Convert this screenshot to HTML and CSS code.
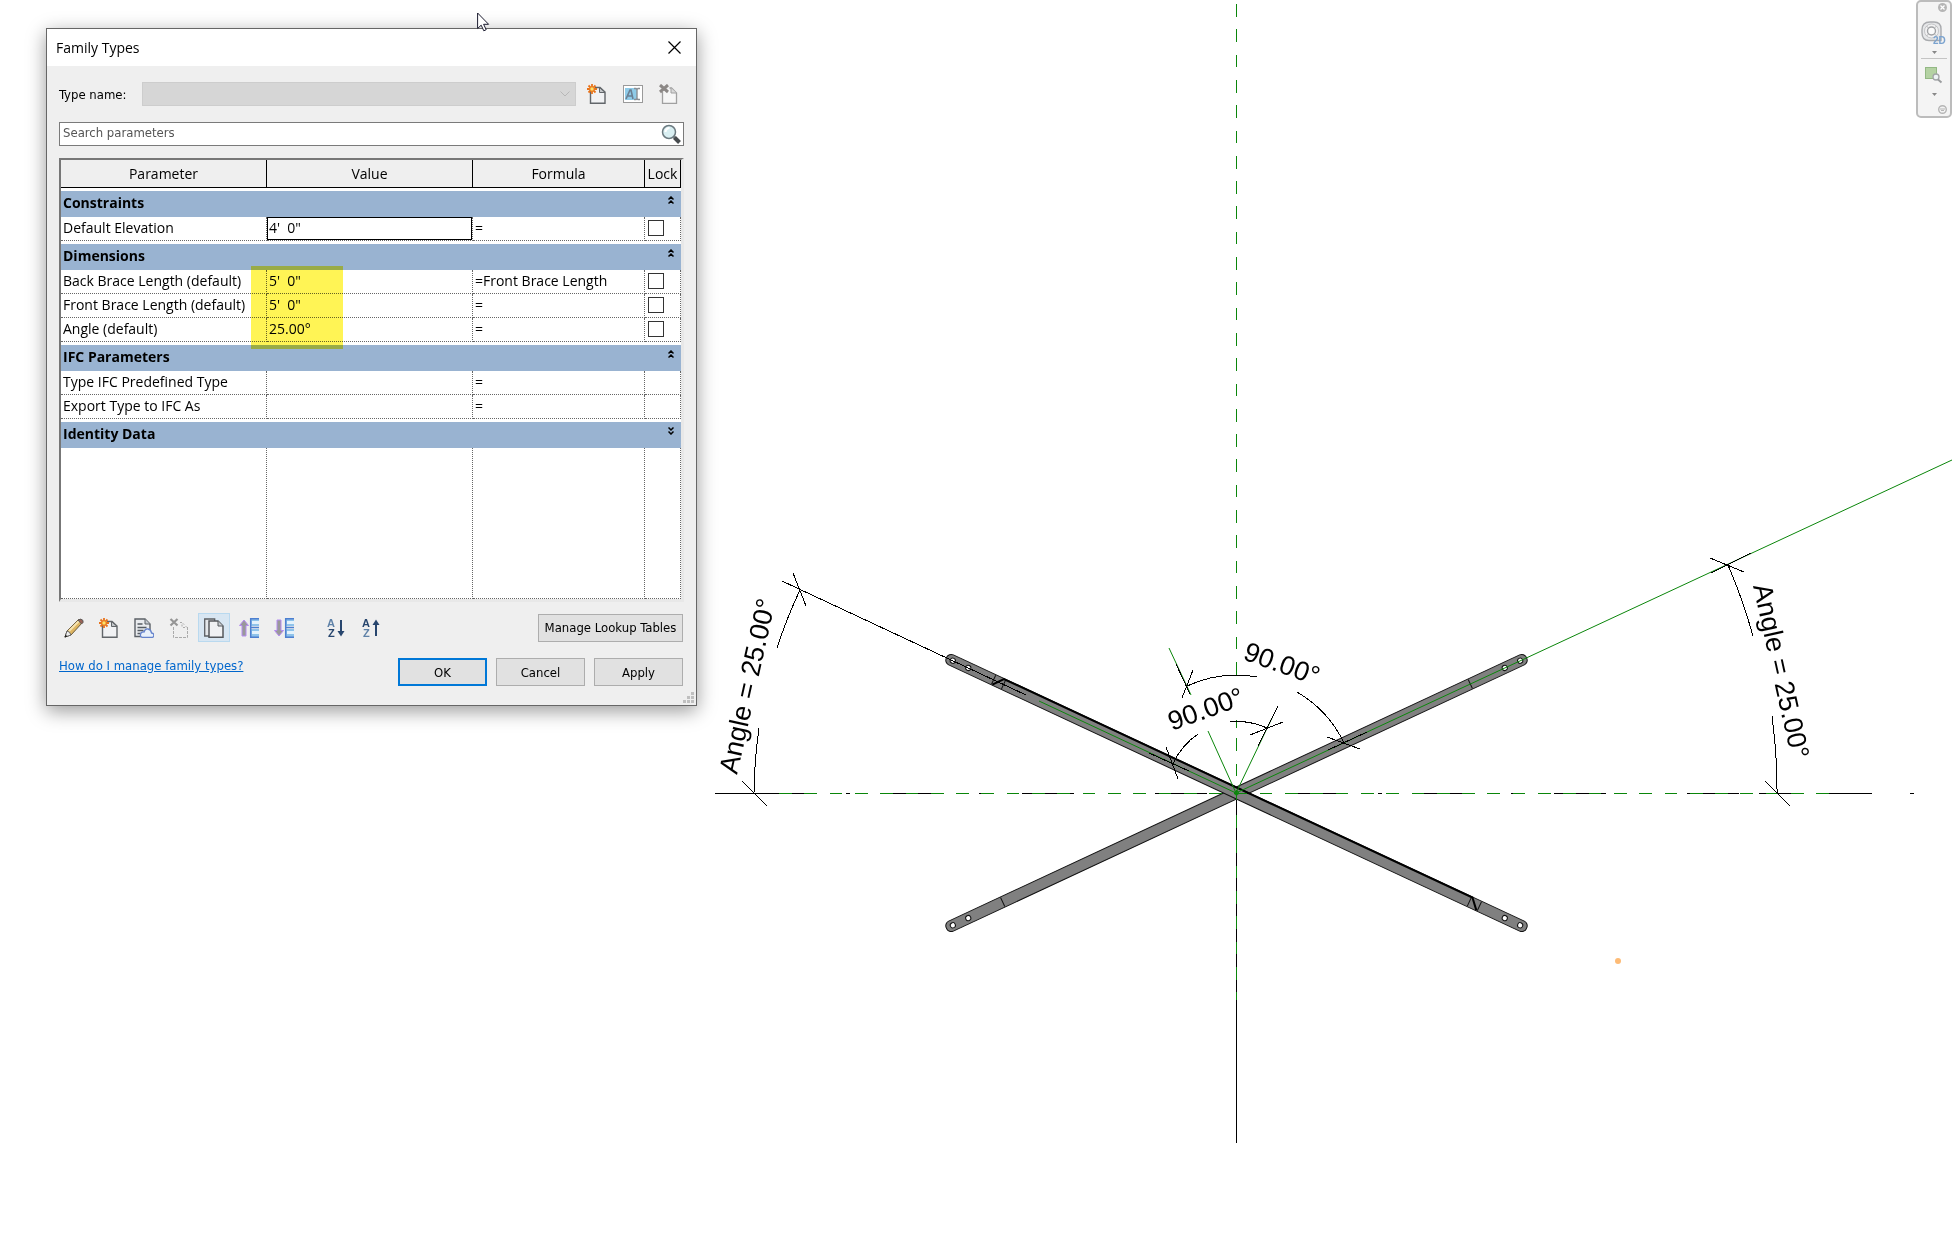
FILE: index.html
```html
<!DOCTYPE html>
<html lang="en">
<head>
    <meta charset="UTF-8">
    <meta name="viewport" content="width=device-width, initial-scale=1.0">
    <title>Family Types</title>
    <link rel="stylesheet" href="styles.css">
</head>
<body>

    <!-- drawing area -->
    <svg class="canvas" viewBox="0 0 1952 1249" preserveAspectRatio="xMinYMin meet" role="img" aria-label="Cross brace elevation">
        <!-- back brace -->
        <g transform="translate(1236.5 793) rotate(-25)">
            <rect class="brace" x="-320" y="-5.5" width="640" height="11" rx="5" />
            <path class="edge" d="M-258 -5V5M258 -5V5" />
            <circle class="hole" cx="-313" cy="0" r="2.6" />
            <circle class="hole" cx="-296" cy="0" r="2.6" />
            <circle class="hole" cx="296" cy="0" r="2.6" />
            <circle class="hole" cx="313" cy="0" r="2.6" />
        </g>

        <!-- front brace -->
        <g transform="translate(1236.5 793) rotate(25)">
            <rect class="brace" x="-320" y="-5.5" width="640" height="11" rx="5" />
            <path class="edge" d="M-268 -5V5M-257 -5V5M257 -5V5M268 -5V5" />
            <path class="heavy" d="M-267 5L-259 -5H258L267 5" />
            <circle class="hole" cx="-313" cy="0" r="2.6" />
            <circle class="hole" cx="-296" cy="0" r="2.6" />
            <circle class="hole" cx="296" cy="0" r="2.6" />
            <circle class="hole" cx="313" cy="0" r="2.6" />
        </g>

        <!-- reference planes -->
        <g class="line">
            <path d="M715 793.5H802" />
            <path d="M756 793.5H1916" stroke-dasharray="52 38 4 39" />
            <path d="M1759 793.5H1803" />
            <path d="M1236.5 800V1143" />
        </g>
        <g class="line green">
            <path d="M779 793.5H1833" stroke-dasharray="12.7 12.6" />
            <path d="M1236.5 4V675" stroke-dasharray="12.7 12.6" />
            <path d="M1236.5 720V728M1236.5 738V751M1236.5 764V776M1236.5 790V800" />
            <path d="M1236.5 815V1000" stroke-dasharray="12.7 12.6" />
        </g>
        <g class="slant green">
            <path d="M1236 793L1952 460" />
            <path d="M1039 701L1236 793" />
            <path d="M1169 648L1191 695" />
            <path d="M1208 731L1236 793L1272 718" />
            <circle cx="1236.5" cy="793" r="2" />
        </g>

        <!-- dimension lines, arcs and ticks -->
        <g class="line">
            <path d="M782 581L1026 695M793 573L806 606M742 781L767 806" />
            <path d="M800 590A482 482 0 0 0 777 648M759 728A482 482 0 0 0 754 793" />
            <path d="M1710 558L1744 572M1711 573L1751 553M1765 781L1790 806" />
            <path d="M1728 565A541 541 0 0 1 1753 636M1772 716A541 541 0 0 1 1777 793" />
            <path d="M1176 664L1190 694M1182 698L1193 670M1327 737L1360 749M1328 750L1367 732" />
            <path d="M1187 686A118 118 0 0 1 1257 677M1297 692A118 118 0 0 1 1344 743" />
            <path d="M1250 735L1283 722M1258 746L1278 706M1166 747L1178 779M1149 753L1189 771" />
            <path d="M1230 722A71 71 0 0 1 1267 728M1198 734A71 71 0 0 0 1173 764" />
        </g>
        <g class="dim">
            <text transform="translate(737 775) rotate(-77.5)">Angle = 25.00°</text>
            <text transform="translate(1753 586) rotate(77.5)">Angle = 25.00°</text>
            <text transform="translate(1172 731) rotate(-20)">90.00°</text>
            <text transform="translate(1242 659) rotate(20)">90.00°</text>
        </g>
        <circle class="dot" cx="1618" cy="961" r="3" />
    </svg>

    <form class="dialog" onsubmit="return false">
        <div class="titlebar">
            <h1>Family Types</h1>
            <button type="button" class="close" aria-label="Close">
                <svg width="13" height="13" viewBox="0 0 13 13"><path d="M.5 .5l12 12M12.5 .5l-12 12" fill="none" stroke="#000" stroke-width="1.2" /></svg>
            </button>
        </div>

        <div class="content">
            <div class="type-row">
                <label for="typeName">Type name:</label>
                <select id="typeName" disabled><option></option></select>
                <button type="button" class="icon" aria-label="New type">
                    <svg width="20" height="20" viewBox="0 0 20 20"><use href="#newDoc" /></svg>
                </button>
                <button type="button" class="icon" aria-label="Rename type">
                    <svg width="20" height="18" viewBox="0 0 20 18">
                        <rect x=".5" y=".5" width="19" height="17" fill="#fff" stroke="#9a9a9a" />
                        <rect x="2" y="3" width="12" height="12" fill="#8fcbe8" />
                        <path d="M3 14L7 5h1l2 9M5 11h4" fill="none" stroke="#6a7f92" stroke-width="1.6" />
                        <path d="M11 3.5h2l1 1 1-1h2M14 4.5v9M11 14.5h2l1-1 1 1h2" fill="none" stroke="#8b8f94" stroke-width="1.4" />
                    </svg>
                </button>
                <button type="button" class="icon" aria-label="Delete type">
                    <svg width="20" height="20" viewBox="0 0 20 20">
                        <path d="M3.5 8v11.5h14V9l-5-5h-2" fill="#f6f6f6" stroke="#a0a0a0" stroke-width="1.3" />
                        <path d="M12 4v5h5.5" fill="#d9d9d9" stroke="#a0a0a0" />
                        <path d="M1 1l8 7M9 1L1 8" stroke="#8c8886" stroke-width="3" />
                    </svg>
                </button>
            </div>

            <div class="search">
                <input type="text" placeholder="Search parameters" aria-label="Search parameters">
                <svg width="20" height="20" viewBox="0 0 20 20">
                    <path d="M12 12l6 6" stroke="#8a8f93" stroke-width="3" />
                    <path d="M13.500 13.500l5 5" stroke="#474b4e" stroke-width="4" />
                    <circle cx="8" cy="8" r="6.5" fill="#d9eff2" stroke="#6c7a80" stroke-width="1.500" />
                    <path d="M4.500 8a4 4 0 0 1 4-4" fill="none" stroke="#fff" stroke-width="2" />
                </svg>
            </div>

            <div class="grid">
                <table>
                    <colgroup><col class="c-name"><col class="c-value"><col class="c-formula"><col class="c-lock"></colgroup>
                    <thead>
                        <tr><th>Parameter</th><th>Value</th><th>Formula</th><th>Lock</th></tr>
                    </thead>
                    <tbody>
                        <tr class="group"><th colspan="4"><div><span>Constraints</span><button type="button" aria-label="Collapse Constraints"><svg width="6" height="8" viewBox="0 0 6 8"><use href="#up" /></svg></button></div></th></tr>
                        <tr><td>Default Elevation</td><td class="active"><input type="text" value="4'  0&quot;" aria-label="Default Elevation"></td><td>=</td><td><input type="checkbox" aria-label="Lock Default Elevation"></td></tr>
                        <tr class="group"><th colspan="4"><div><span>Dimensions</span><button type="button" aria-label="Collapse Dimensions"><svg width="6" height="8" viewBox="0 0 6 8"><use href="#up" /></svg></button></div></th></tr>
                        <tr><td>Back Brace Length (default)</td><td class="marked"><input type="text" value="5'  0&quot;" aria-label="Back Brace Length"><span class="highlight"></span></td><td>=Front Brace Length</td><td><input type="checkbox" aria-label="Lock Back Brace Length"></td></tr>
                        <tr><td>Front Brace Length (default)</td><td><input type="text" value="5'  0&quot;" aria-label="Front Brace Length"></td><td>=</td><td><input type="checkbox" aria-label="Lock Front Brace Length"></td></tr>
                        <tr><td>Angle (default)</td><td><input type="text" value="25.00°" aria-label="Angle"></td><td>=</td><td><input type="checkbox" aria-label="Lock Angle"></td></tr>
                        <tr class="group"><th colspan="4"><div><span>IFC Parameters</span><button type="button" aria-label="Collapse IFC Parameters"><svg width="6" height="8" viewBox="0 0 6 8"><use href="#up" /></svg></button></div></th></tr>
                        <tr><td>Type IFC Predefined Type</td><td><input type="text" aria-label="Type IFC Predefined Type"></td><td>=</td><td></td></tr>
                        <tr><td>Export Type to IFC As</td><td><input type="text" aria-label="Export Type to IFC As"></td><td>=</td><td></td></tr>
                        <tr class="group"><th colspan="4"><div><span>Identity Data</span><button type="button" aria-label="Expand Identity Data"><svg width="6" height="8" viewBox="0 0 6 8"><use href="#down" /></svg></button></div></th></tr>
                        <tr class="filler"><td></td><td></td><td></td><td></td></tr>
                    </tbody>
                </table>
            </div>

            <div class="toolbar">
                <button type="button" class="tool" aria-label="Edit parameter">
                    <svg width="20" height="20" viewBox="0 0 20 20">
                        <path d="M1 19l2-6L14.5 1.5q3-1 4 3L7 17z" fill="#dfb662" stroke="#6b5a3c" />
                        <path d="M5 13L15 3" stroke="#f6e3b0" stroke-width="2" />
                        <path d="M14 2q3-2 5 .5v2L17.5 6z" fill="#9b6256" stroke="#5b5b5b" />
                        <path d="M1 19l2-6q3 .5 4 4z" fill="#eee" stroke="#666" />
                        <path d="M.5 19.5l1-3 2 2z" fill="#222" />
                    </svg>
                </button>
                <button type="button" class="tool" aria-label="New parameter">
                    <svg width="20" height="20" viewBox="0 0 20 20"><use href="#newDoc" /></svg>
                </button>
                <button type="button" class="tool" aria-label="Shared parameter">
                    <svg width="20" height="20" viewBox="0 0 20 20">
                        <path d="M1 1h10l5 5v12.5H1z" fill="#e9ebee" stroke="#5b6066" stroke-width="1.4" />
                        <path d="M11 1v5h5" fill="#c5c9cf" stroke="#5b6066" />
                        <path d="M3.5 6h5M3.5 9.5h9M3.5 12.5h6M3.5 15.5h3" stroke="#565c63" stroke-width="1.6" />
                        <path d="M8.5 19.3q-2.5-.3-2-3t3.5-2.3q1-3.5 4-3t3.500 4q2.500.2 2.300 2.500t-2.300 1.800z" fill="#e9f1fb" stroke="#6583cc" stroke-width="1.3" />
                    </svg>
                </button>
                <button type="button" class="tool" aria-label="Delete parameter">
                    <svg width="20" height="20" viewBox="0 0 20 20">
                        <path d="M4.500 9v10.500h14V9" fill="none" stroke="#aaa" stroke-dasharray="3 1" />
                        <path d="M11 4.500h2v5h5l-5-5" fill="none" stroke="#aaa" stroke-dasharray="2 2" />
                        <path d="M1.500 1l7 6.500M8.500 1l-7 6.500" stroke="#959595" stroke-width="2.200" />
                    </svg>
                </button>
                <button type="button" class="tool on" aria-label="Duplicate parameter">
                    <svg width="20" height="20" viewBox="0 0 20 20">
                        <path d="M.7 1h10v17H.7z" fill="#e4e7ea" stroke="#5c6064" stroke-width="1.3" />
                        <path d="M5 3h9l5 5v11.300H5z" fill="#f0f1f3" stroke="#55585c" stroke-width="1.500" />
                        <path d="M14 3v5h5" fill="#c9ccd0" stroke="#55585c" />
                    </svg>
                </button>
                <button type="button" class="tool" aria-label="Move up">
                    <svg width="20" height="20" viewBox="0 0 20 20">
                        <use href="#slots" />
                        <path d="M5 2l4.500 5.500H7V18H3V7.500H.5z" fill="#999" stroke="#b58cf0" />
                    </svg>
                </button>
                <button type="button" class="tool" aria-label="Move down">
                    <svg width="20" height="20" viewBox="0 0 20 20">
                        <use href="#slots" />
                        <path d="M5 18l4.500-5.500H7V2H3v10.500H.5z" fill="#999" stroke="#b58cf0" />
                    </svg>
                </button>
                <button type="button" class="tool sort" aria-label="Sort ascending">
                    <svg width="18" height="20" viewBox="0 0 18 20">
                        <text class="az a" x="0" y="9">A</text><text class="az" x="1" y="19">Z</text>
                        <path d="M14 2v13" stroke="#28466e" stroke-width="2" /><path d="M10.500 13h7l-3.500 5.500z" fill="#28466e" />
                    </svg>
                </button>
                <button type="button" class="tool" aria-label="Sort descending">
                    <svg width="18" height="20" viewBox="0 0 18 20">
                        <text class="az" x="0" y="9">A</text><text class="az a" x="1" y="19">Z</text>
                        <path d="M14 5v13" stroke="#28466e" stroke-width="2" /><path d="M10.500 7h7L14 1.500z" fill="#28466e" />
                    </svg>
                </button>
                <button type="button" class="btn lookup">Manage Lookup Tables</button>
            </div>

            <div class="footer">
                <a href="#">How do I manage family types?</a>
                <button type="submit" class="btn ok">OK</button>
                <button type="button" class="btn">Cancel</button>
                <button type="button" class="btn">Apply</button>
            </div>
        </div>
        <svg class="grip" width="11" height="11" viewBox="0 0 11 11"><path d="M8 0h3v3H8zM4 4h3v3H4zM8 4h3v3H8zM0 8h3v3H0zM4 8h3v3H4zM8 8h3v3H8z" fill="#bfbfbf" /></svg>
    </form>

    <!-- navigation bar -->
    <nav class="navbar">
        <button type="button" aria-label="Close navigation bar">
            <svg width="9" height="9" viewBox="0 0 9 9"><circle cx="4.500" cy="4.500" r="4.500" fill="#b5b5b5" /><path d="M2.500 2.500l4 4M6.500 2.500l-4 4" stroke="#fff" stroke-width="1.300" /></svg>
        </button>
        <button type="button" class="wheel" aria-label="2D steering wheel">
            <svg width="26" height="24" viewBox="0 0 26 24">
                <path d="M9 1h4q7 0 7 7v11.500H8q-7 0-7-8V9q0-8 8-8z" fill="#e6e7e9" stroke="#a9abae" stroke-width="1.400" />
                <circle cx="10.500" cy="10" r="7" fill="#f2f2f3" stroke="#c4c5c7" />
                <circle cx="10.500" cy="10" r="4" fill="#fafafa" stroke="#a0a2a5" stroke-width="1.400" />
                <path d="M5.500 5l2 2M13.500 13l2 2M5.500 15l2-2M15.500 5l-2 2" stroke="#b4b5b7" />
                <text class="two-d" x="12" y="23">2D</text>
            </svg>
        </button>
        <svg class="tri" width="5" height="3" viewBox="0 0 5 3"><path d="M0 0h5L2.500 3z" fill="#888" /></svg>
        <hr>
        <button type="button" class="zoom" aria-label="Zoom region">
            <svg width="18" height="18" viewBox="0 0 18 18">
                <rect x=".5" y="1.500" width="11" height="11" fill="#b4d2a3" stroke="#93b884" />
                <circle cx="11" cy="11" r="3" fill="#eef4f6" stroke="#a2a6a8" stroke-width="1.300" />
                <path d="M13 13.500l3.500 3" stroke="#9a9c9e" stroke-width="2" />
            </svg>
        </button>
        <svg class="tri" width="5" height="3" viewBox="0 0 5 3"><path d="M0 0h5L2.500 3z" fill="#888" /></svg>
        <button type="button" class="last" aria-label="Navigation bar options">
            <svg width="9" height="9" viewBox="0 0 9 9"><circle cx="4.500" cy="4.500" r="3.800" fill="#f4f4f4" stroke="#b5b5b5" stroke-width="1.400" /><path d="M2 4h5M3 5.500h3" stroke="#b5b5b5" /></svg>
        </button>
    </nav>

    <svg class="cursor" width="13" height="20" viewBox="0 0 13 20"><path d="M.6 1v15.500l3.600-3.300 2.600 5.600 2.400-1.100-2.600-5.400h5z" fill="#fff" stroke="#1a1a2e" /></svg>

    <!-- shared symbols -->
    <svg class="symbols" aria-hidden="true">
        <symbol id="up" viewBox="0 0 6 8"><path d="M.5 3.500L3 1l2.500 2.500M.5 7.500L3 5l2.500 2.500" fill="none" stroke="#000" stroke-width="1.500" /></symbol>
        <symbol id="down" viewBox="0 0 6 8"><path d="M.5 .5L3 3 5.500 .5M.5 4.500L3 7l2.500-2.500" fill="none" stroke="#000" stroke-width="1.500" /></symbol>
        <symbol id="newDoc" viewBox="0 0 20 20">
            <path d="M3.500 5v14.300h14.500V8l-5-4.500H8" fill="#f1f2f4" stroke="#62666a" stroke-width="1.400" />
            <path d="M12.500 3.500V8.500H18z" fill="#c3c6c9" stroke="#62666a" />
            <path d="M5 0v10M0 5h10M1.500 1.500l7 7M8.500 1.500l-7 7" stroke="#e8731c" stroke-width="1.800" />
            <circle cx="5" cy="5" r="2.200" fill="#fce36c" stroke="#ea7a1e" />
        </symbol>
        <symbol id="slots" viewBox="0 0 20 20">
            <path d="M12 1h8v7h-8zM12 11h8v8h-8z" fill="#8fc3ea" />
            <path d="M13 3h7v3h-7zM13 13h7v3h-7z" fill="#e3f2fc" />
            <path d="M20 .7h-8.300v18.600H20M12 9.500h8" fill="none" stroke="#4d7fd0" stroke-width="1.500" />
        </symbol>
    </svg>

</body>
</html>
```
FILE: styles.css
```css
* {
    margin: 0;
    padding: 0;
    box-sizing: border-box;
}

body {
    min-height: 100vh;
    background: #fff;
    color: #000;
    font-family: "DejaVu Sans Condensed", "Noto Sans", sans-serif;
    font-size: 13px;
    overflow: hidden;
}

button {
    border: 0;
    background: none;
    font: inherit;
}

svg {
    display: block;
}

.symbols {
    position: absolute;
    width: 0;
    height: 0;
}

/* drawing */
.canvas {
    position: absolute;
    top: 0;
    left: 0;
    width: 100%;
}

.line,
.slant {
    fill: none;
    stroke: #000;
    stroke-width: 1;
}

.line {
    shape-rendering: crispEdges;
}

.green {
    stroke: #0a860a;
}

.brace {
    fill: #808080;
    stroke: #111;
}

.edge {
    fill: none;
    stroke: #111;
}

.heavy {
    fill: none;
    stroke: #000;
    stroke-width: 2;
}

.hole {
    fill: #fff;
    stroke: #111;
}

.dim text {
    font-family: "Liberation Sans", Arial, sans-serif;
    font-size: 27px;
}

.dot {
    fill: #fdbb76;
}

/* dialog */
.dialog {
    position: relative;
    width: 651px;
    max-width: 100%;
    margin: 28px 0 0 46px;
    background: #efefef;
    border: 1px solid #666;
    box-shadow: 0 5px 18px rgba(0, 0, 0, 0.4);
}

.titlebar {
    display: flex;
    align-items: center;
    justify-content: space-between;
    height: 37px;
    padding: 0 15px 0 9px;
    background: #fff;
}

.titlebar h1 {
    font-family: "Open Sans", sans-serif;
    font-size: 14px;
    font-weight: 400;
}

.content {
    padding: 16px 12px 19px;
}

.type-row {
    display: flex;
    align-items: center;
    gap: 6px;
    height: 24px;
}

.type-row label {
    width: 77px;
}

.type-row select {
    flex: 1;
    height: 24px;
    appearance: none;
    border: 1px solid #bfbfbf;
    background: #ccc url("data:image/svg+xml,%3Csvg xmlns='http://www.w3.org/2000/svg' width='10' height='6'%3E%3Cpath d='M.5 .5L5 5 9.5 .5' fill='none' stroke='%23a0a0a0'/%3E%3C/svg%3E") no-repeat right 5px center;
}

.icon {
    display: flex;
    align-items: center;
    justify-content: center;
    width: 30px;
    height: 24px;
}

.search {
    display: flex;
    align-items: center;
    height: 24px;
    margin-top: 16px;
    padding-right: 2px;
    border: 1px solid #7a7a7a;
    background: #fff;
}

.search input {
    flex: 1;
    padding: 0 3px 3px;
    border: 0;
    outline: 0;
    background: transparent;
    font: inherit;
}

.search input::placeholder {
    color: #555;
}

/* parameter table */
.grid {
    margin-top: 12px;
    border: solid;
    border-width: 2px 3px 3px 2px;
    border-color: #777 #e8e8e8 #e8e8e8 #777;
    background: #fff;
}

table {
    width: 100%;
    table-layout: fixed;
    border-collapse: separate;
    border-spacing: 0;
    font-family: "Open Sans", sans-serif;
    font-size: 14px;
    line-height: 20px;
}

.c-name,
.c-value {
    width: 206px;
}

.c-formula {
    width: 172px;
}

.c-lock {
    width: 36px;
}

thead th {
    height: 28px;
    background: #efefef;
    border-right: 1px solid #000;
    border-bottom: 1px solid #000;
    font-weight: 400;
}

tbody td {
    height: 24px;
    padding: 0 0 2px 2px;
    border-right: 1px dotted #666;
    border-bottom: 1px dotted #666;
    white-space: nowrap;
}

.group th {
    height: 29px;
    padding: 0 7px 2px 2px;
    border-top: 3px solid #fff;
    background: #99b3d1;
    background-clip: padding-box;
    text-align: left;
}

.group div {
    display: flex;
    align-items: flex-start;
    justify-content: space-between;
}

.group button {
    padding-top: 3px;
}

td input[type="text"] {
    display: block;
    width: 100%;
    height: 21px;
    border: 0;
    outline: 0;
    background: transparent;
    font: inherit;
    white-space: pre;
}

tbody .active {
    padding: 0;
}

.active input[type="text"] {
    height: 23px;
    padding: 0 1px 2px;
    border: 1px solid #000;
}

td input[type="checkbox"] {
    display: block;
    width: 16px;
    height: 16px;
    margin-left: 1px;
    appearance: none;
    border: 1px solid #333;
    background: #fff;
}

.marked {
    position: relative;
}

/* marker stroke drawn over the three values */
.highlight {
    position: absolute;
    top: -4px;
    left: -16px;
    z-index: 1;
    width: 92px;
    height: 83px;
    background: #fff455;
    mix-blend-mode: multiply;
    pointer-events: none;
}

.filler td {
    height: 151px;
}

/* buttons below the table */
.toolbar {
    display: flex;
    align-items: center;
    gap: 3px;
    height: 29px;
    margin: 11px 1px 0 -1px;
}

.tool {
    display: flex;
    align-items: center;
    justify-content: center;
    width: 32px;
    height: 29px;
}

.tool.on {
    border: 1px solid #b9d9ef;
    background: #d8e6f2;
}

.tool.sort {
    margin-left: 17px;
}

.az {
    fill: #28466e;
    font: bold 11px "Liberation Sans", sans-serif;
}

.az.a {
    fill: #5f82a8;
}

.btn {
    width: 89px;
    height: 28px;
    border: 1px solid #adadad;
    background: #e1e1e1;
    white-space: nowrap;
}

.btn.ok {
    border: 2px solid #0078d7;
}

.btn.lookup {
    width: 145px;
    margin-left: auto;
}

.footer {
    display: flex;
    gap: 9px;
    margin: 16px 1px 0 0;
}

.footer a {
    margin-right: auto;
    color: #0066cc;
}

.grip {
    position: absolute;
    right: 2px;
    bottom: 2px;
}

/* navigation bar */
.navbar {
    position: absolute;
    top: 0;
    right: 0;
    display: flex;
    flex-direction: column;
    align-items: center;
    width: 36px;
    height: 118px;
    padding: 1px;
    border: 2px solid #bcbcbc;
    border-radius: 5px;
    background: #f4f4f4;
}

.navbar button:first-child,
.navbar .last {
    align-self: flex-end;
    margin-right: 2px;
}

.navbar .last {
    margin-top: auto;
    margin-bottom: 1px;
}

.navbar .wheel {
    margin: 9px 0 6px;
}

.navbar .zoom {
    margin-bottom: 9px;
}

.navbar hr {
    width: 26px;
    margin: 4px 0 7px;
    border: 0;
    border-top: 1px solid #c4c4c4;
}

.two-d {
    fill: #7ba3cf;
    font: bold 10px "Liberation Sans", sans-serif;
}

.cursor {
    position: absolute;
    top: 12px;
    left: 477px;
}
```
